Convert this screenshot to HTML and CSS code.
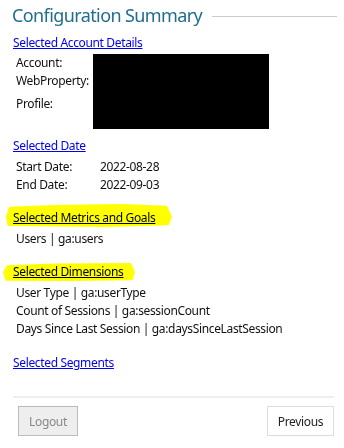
FILE: index.html
```html
<!DOCTYPE html>
<html lang="en">
<head>
<meta charset="utf-8">
<title>Configuration Summary</title>
<link rel="stylesheet" href="styles.css">
</head>
<body>
<div class="page">
  <div class="title-row">
    <h1 class="title">Configuration Summary</h1>
    <span class="rule"></span>
  </div>

  <section class="sec sec-account">
    <a class="sec-link" href="#">Selected Account Details</a>
    <div class="kv">
      <div class="kv-labels">
        <div>Account:</div>
        <div>WebProperty:</div>
        <div class="kv-profile">Profile:</div>
      </div>
      <div class="redact"></div>
    </div>
  </section>

  <section class="sec sec-date">
    <a class="sec-link" href="#">Selected Date</a>
    <div class="dates">
      <span>Start Date:</span><span>2022-08-28</span>
      <span>End Date:</span><span>2022-09-03</span>
    </div>
  </section>

  <section class="sec">
    <div class="hl-wrap">
      <span class="hl hl-metrics"></span>
      <a class="sec-link" href="#">Selected Metrics and Goals</a>
    </div>
    <ul class="items">
      <li>Users | ga:users</li>
    </ul>
  </section>

  <section class="sec">
    <div class="hl-wrap">
      <span class="hl hl-dims"></span>
      <a class="sec-link" href="#">Selected Dimensions</a>
    </div>
    <ul class="items">
      <li>User Type | ga:userType</li>
      <li>Count of Sessions | ga:sessionCount</li>
      <li>Days Since Last Session | ga:daysSinceLastSession</li>
    </ul>
  </section>

  <section class="sec sec-seg">
    <a class="sec-link" href="#">Selected Segments</a>
  </section>

  <div class="footer">
    <button class="btn btn-logout" type="button" disabled>Logout</button>
    <button class="btn btn-prev" type="button">Previous</button>
  </div>
</div>
</body>
</html>
```

FILE: styles.css
```css
* { box-sizing: border-box; }

body {
  margin: 0;
  background: #fff;
  color: #111;
  font-family: "Noto Sans", "Open Sans", sans-serif;
  font-size: 12px;
  line-height: 18px;
  letter-spacing: -0.35px;
}

.page {
  width: 344px;
  height: 448px;
  padding: 0 10px 0 12px;
}

.title-row {
  display: flex;
  align-items: center;
  gap: 10px;
  height: 30px;
  margin-right: -3px;
}

.title {
  margin: 0;
  font-size: 18px;
  font-weight: 400;
  line-height: 30px;
  letter-spacing: -0.6px;
  color: #1f6e8c;
  white-space: nowrap;
}

.rule {
  flex: 1;
  height: 1px;
  margin-top: 2px;
  background: #ccc;
}

.sec-link {
  color: #0000ee;
  text-decoration: underline;
  position: relative;
}

.sec {
  padding-left: 1px;
  margin-top: 15px;
}

.sec-account { margin-top: 4px; }
.sec-date { margin-top: 8px; }
.sec-seg { margin-top: 16px; }

.kv {
  display: flex;
  margin-top: 2px;
  padding-left: 3px;
}

.kv-labels {
  width: 77px;
}

.kv-profile { margin-top: 5px; }

.redact {
  width: 176px;
  height: 75px;
  background: #000;
}

.dates {
  display: grid;
  grid-template-columns: 84px auto;
  margin-top: 3px;
  padding-left: 3px;
}

.items {
  list-style: none;
  margin: 3px 0 0;
  padding: 0 0 0 3px;
}

.hl-wrap {
  position: relative;
}

.hl {
  position: absolute;
  background: #ffff00;
  mix-blend-mode: multiply;
  z-index: 1;
  pointer-events: none;
}

.hl-metrics {
  left: -7px;
  top: -5px;
  width: 166px;
  height: 23px;
  clip-path: polygon(2% 12%, 30% 4%, 70% 0, 97% 8%, 100% 55%, 98% 92%, 60% 100%, 20% 97%, 1% 96%, 0 55%);
}

.hl-dims {
  left: -10px;
  top: 0;
  width: 132px;
  height: 18px;
  clip-path: polygon(3% 12%, 40% 3%, 97% 0, 100% 50%, 98% 96%, 50% 100%, 2% 98%, 0 50%);
}

.footer {
  display: flex;
  justify-content: space-between;
  align-items: flex-start;
  margin: 24px 0 0 1px;
  padding: 8px 0 0 5px;
  border-top: 2px solid #eee;
}

.btn {
  height: 30px;
  font-family: inherit;
  font-size: 12px;
  letter-spacing: -0.35px;
  padding: 0;
  background: #fff;
  color: #222;
  border: 1px solid #ddd;
}

.btn-logout {
  width: 60px;
  background: #eee;
  color: #888;
  border-color: #bbb;
}

.btn-prev {
  width: 67px;
}
```
